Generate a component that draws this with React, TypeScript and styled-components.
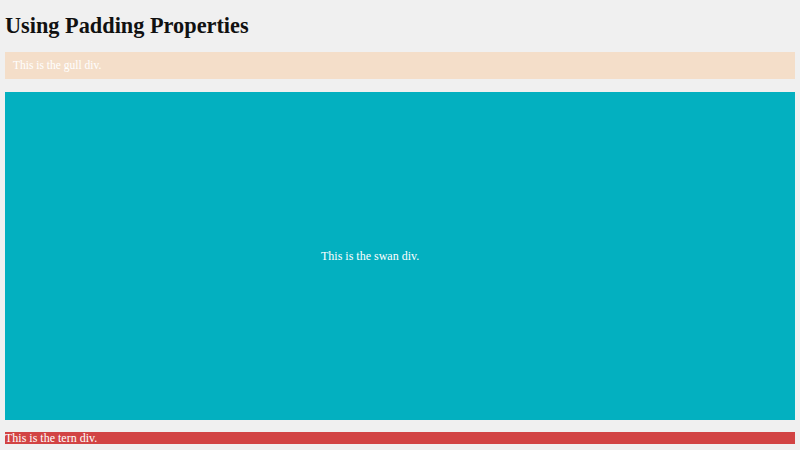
import React from "react";
import styled, { createGlobalStyle } from "styled-components";

const Global = createGlobalStyle`
  html, body { margin: 0; padding: 0; }
  body {
    background: #f0f0f0;
    font-family: "Liberation Serif", "DejaVu Serif", serif;
    padding: 5px;
  }
`;

const Title = styled.h1`
  margin: 8px 0 13px;
  font-size: 22.3px;
  line-height: 26px;
  font-weight: bold;
  color: #111;
`;

const Gull = styled.div`
  background: #f4dec9;
  color: #ffffff;
  font-size: 11.5px;
  line-height: 15px;
  padding: 6px 8px;
  margin-bottom: 13px;
`;

const Swan = styled.div`
  background: #03b0c0;
  color: #ffffff;
  font-size: 12px;
  line-height: 16px;
  height: 328px;
  box-sizing: border-box;
  padding: 156px 0 0 316px;
  margin-bottom: 12px;
`;

const Tern = styled.div`
  background: #d24444;
  color: #ffffff;
  font-size: 12px;
  line-height: 12px;
  height: 12px;
`;

export default function App() {
  return (
    <>
      <Global />
      <Title>Using Padding Properties</Title>
      <Gull>This is the gull div.</Gull>
      <Swan>This is the swan div.</Swan>
      <Tern>This is the tern div.</Tern>
    </>
  );
}
